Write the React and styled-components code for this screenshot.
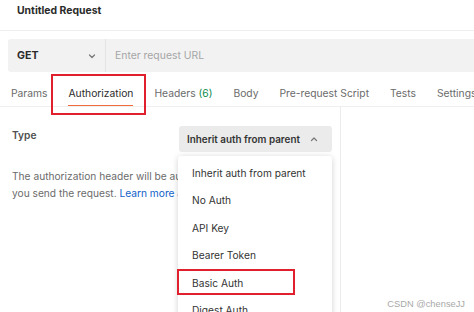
import React from "react";
import styled, { createGlobalStyle } from "styled-components";

const Global = createGlobalStyle`
  html, body { margin: 0; padding: 0; background: #fff; }
  body { font-family: Inter, "Noto Sans", sans-serif; }
`;

const Page = styled.div`
  position: relative;
  width: 474px;
  height: 312px;
  overflow: hidden;
  background: #fff;
  color: #212121;
  font-size: 10.2px;
`;

const Header = styled.div`
  height: 31px;
  border-bottom: 1px solid #efefef;
  padding: 3px 0 0 17px;
  box-sizing: border-box;
  font-size: 10.4px;
  font-weight: 700;
  line-height: 16px;
  color: #2b2b2b;
`;

const UrlBar = styled.div`
  display: flex;
  height: 33px;
  margin: 8px 0 0 8px;
  background: #f2f2f2;
  border-radius: 3px 0 0 3px;
`;

const Method = styled.div`
  display: flex;
  align-items: center;
  justify-content: space-between;
  width: 98px;
  box-sizing: border-box;
  padding: 0 8px 0 9px;
  border-right: 1px solid #e3e3e3;
  font-weight: 700;
  font-size: 10.6px;
  color: #2b2b2b;
`;

const UrlInput = styled.div`
  display: flex;
  align-items: center;
  padding-left: 9px;
  color: #a6a6a6;
  font-size: 10.4px;
`;

const Tabs = styled.div`
  display: flex;
  height: 35px;
  border-bottom: 1px solid #efefef;
  box-sizing: border-box;
  padding-left: 11px;
  gap: 21px;
  white-space: nowrap;
`;

const Tab = styled.div`
  position: relative;
  padding-top: 15px;
  font-size: 10.3px;
  color: ${(p) => (p.$active ? "#2b2b2b" : "#6b6b6b")};
  &::after {
    content: "";
    display: ${(p) => (p.$active ? "block" : "none")};
    position: absolute;
    left: 0;
    right: 0;
    bottom: 0;
    height: 1.5px;
    background: #f26b3a;
  }
`;

const Count = styled.span`
  color: #0c8a4b;
`;

const Body = styled.div`
  display: flex;
  height: 205px;
`;

const Left = styled.div`
  width: 341px;
  border-right: 1px solid #ececec;
  box-sizing: border-box;
  padding: 19px 8px 0 12px;
`;

const TypeRow = styled.div`
  display: flex;
  justify-content: space-between;
  align-items: flex-start;
`;

const Label = styled.div`
  font-weight: 600;
  color: #505050;
  font-size: 10.2px;
  line-height: 16px;
  margin-top: 1px;
`;

const Select = styled.div`
  display: flex;
  align-items: center;
  justify-content: space-between;
  width: 153px;
  height: 26px;
  box-sizing: border-box;
  padding: 0 13px 0 8px;
  background: #ebebeb;
  border-radius: 3px;
  font-weight: 600;
  font-size: 9.9px;
  color: #333;
`;

const Desc = styled.p`
  margin: 16px 0 0;
  font-size: 10.2px;
  line-height: 17px;
  color: #6b6b6b;
`;

const Link = styled.span`
  color: #0f62c9;
`;

const Menu = styled.div`
  position: absolute;
  left: 178px;
  top: 156px;
  width: 154px;
  height: 170px;
  background: #fff;
  border-radius: 3px;
  box-shadow: 0 1px 6px rgba(0, 0, 0, 0.18);
  padding-top: 3px;
  box-sizing: border-box;
`;

const MenuItem = styled.div`
  height: 27.5px;
  display: flex;
  align-items: center;
  padding-left: 14px;
  font-size: 10.2px;
  color: #333;
  white-space: nowrap;
`;

const Highlight = styled.div`
  position: absolute;
  border: 2px solid #e0202c;
  box-sizing: border-box;
  pointer-events: none;
`;

const Watermark = styled.div`
  position: absolute;
  right: 9px;
  bottom: 3px;
  font-size: 9.3px;
  color: #a8a8a8;
  font-family: "Liberation Sans", Arial, sans-serif;
`;

const Chevron = ({ up }) => (
  <svg width="10" height="10" viewBox="0 0 10 10" fill="none">
    <polyline
      points={up ? "2.5,6.5 5,4 7.5,6.5" : "2.5,4 5,6.5 7.5,4"}
      stroke="#777"
      strokeWidth="1.2"
      strokeLinecap="round"
      strokeLinejoin="round"
    />
  </svg>
);

const tabs = [
  { label: "Params" },
  { label: "Authorization", active: true },
  { label: "Headers", count: "(6)" },
  { label: "Body" },
  { label: "Pre-request Script" },
  { label: "Tests" },
  { label: "Settings" },
];

const items = [
  "Inherit auth from parent",
  "No Auth",
  "API Key",
  "Bearer Token",
  "Basic Auth",
  "Digest Auth",
];

export default function App() {
  return (
    <>
      <Global />
      <Page>
        <Header>Untitled Request</Header>
        <UrlBar>
          <Method>
            GET
            <Chevron />
          </Method>
          <UrlInput>Enter request URL</UrlInput>
        </UrlBar>
        <Tabs>
          {tabs.map((t) => (
            <Tab key={t.label} $active={t.active}>
              {t.label}
              {t.count && (
                <>
                  {" "}
                  <Count>{t.count}</Count>
                </>
              )}
            </Tab>
          ))}
        </Tabs>
        <Body>
          <Left>
            <TypeRow>
              <Label>Type</Label>
              <Select>
                Inherit auth from parent
                <Chevron up />
              </Select>
            </TypeRow>
            <Desc>
              The authorization header will be automatically generated when
              you send the request. <Link>Learn more about authorization</Link>
            </Desc>
          </Left>
        </Body>
        <Menu>
          {items.map((i) => (
            <MenuItem key={i}>{i}</MenuItem>
          ))}
        </Menu>
        <Highlight style={{ left: 51, top: 74, width: 95, height: 41 }} />
        <Highlight style={{ left: 177, top: 269, width: 118, height: 26 }} />
        <Watermark>CSDN @chenseJJ</Watermark>
      </Page>
    </>
  );
}
